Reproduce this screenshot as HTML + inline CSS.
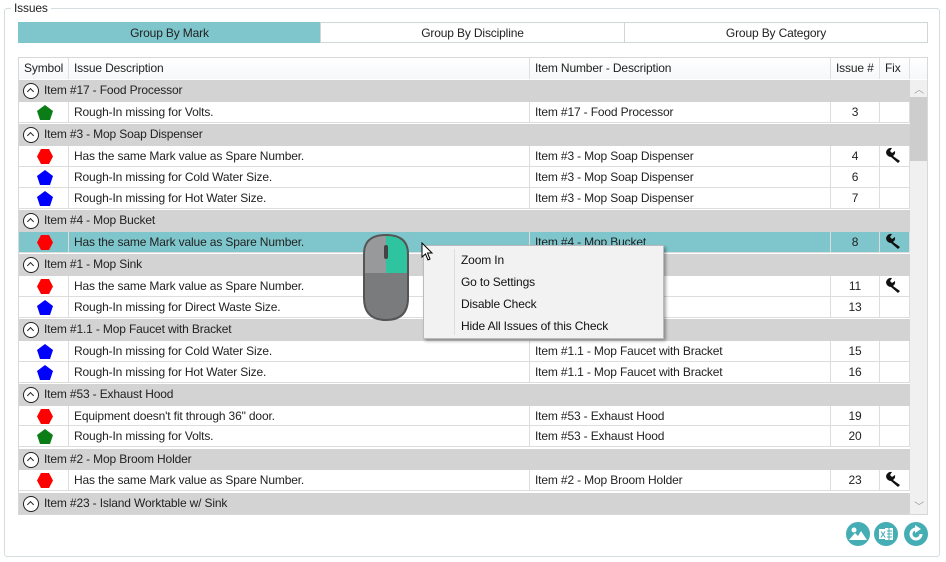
<!DOCTYPE html>
<html><head><meta charset="utf-8"><style>
*{box-sizing:border-box;margin:0;padding:0}
body{width:946px;height:562px;background:#fff;font-family:"Liberation Sans",sans-serif;font-size:12px;color:#222;position:relative;overflow:hidden;letter-spacing:-0.15px}
.a{position:absolute}
.gb{left:4px;top:8px;width:936px;height:549px;border:1px solid #d5dde0;border-radius:3px}
.leg{left:6px;top:-8px;background:#fff;padding:0 3px;font-size:12px;color:#222}
.tab{top:22px;height:21px;border:1px solid #cfd6d8;text-align:center;line-height:20px;background:#fff}
.grid{left:18px;top:57px;width:910px;height:458px;border:1px solid #d8d8d8;overflow:hidden}
.hd{top:0;height:21px;line-height:20px;border-right:1px solid #e0e0e0;padding-left:5px;background:linear-gradient(#fff,#f5f7f9)}
.g{left:0;width:891px;height:22px;background:#d3d3d3;line-height:21px;padding-left:25px}
.g:before{content:"";position:absolute;left:4px;top:3px;width:14px;height:14px;border:1.5px solid #222;border-radius:50%;background:#fff}
.g:after{content:"";position:absolute;left:9px;top:9px;width:4px;height:4px;border-left:1.5px solid #222;border-top:1.5px solid #222;transform:rotate(45deg)}
.r{left:0;width:891px;height:21px;line-height:20px;border-bottom:1px solid #ddd;background:#fff}
.r span{position:absolute;top:0;height:21px;border-right:1px solid #ddd}
.c1{left:0;width:50px}.c2{left:50px;width:461px;padding-left:5px}.c3{left:511px;width:301px;padding-left:5px}.c4{left:812px;width:49px;text-align:center}.c5{left:861px;width:30px}
.sel{background:#7ec6cc}
.sh{position:absolute;left:18px;top:3px;width:16px;height:15px}
.menu{left:423px;top:245px;width:241px;height:94px;background:#f2f2f2;border:1px solid #bbb;box-shadow:2px 2px 3px rgba(0,0,0,.35)}
.menu div{position:absolute;left:37px;font-size:12px;color:#111}
</style></head><body>
<div class="a gb"><div class="a leg">Issues</div></div>
<div class="a tab" style="left:18px;width:303px;background:#7ec6cc;border-color:#7ec6cc">Group By Mark</div>
<div class="a tab" style="left:320px;width:305px">Group By Discipline</div>
<div class="a tab" style="left:624px;width:304px">Group By Category</div>

<div class="a grid">
<div class="a hd" style="left:0;width:50px">Symbol</div>
<div class="a hd" style="left:50px;width:461px">Issue Description</div>
<div class="a hd" style="left:511px;width:301px">Item Number - Description</div>
<div class="a hd" style="left:812px;width:49px">Issue #</div>
<div class="a hd" style="left:861px;width:30px">Fix</div>
<div class="a hd" style="left:891px;width:19px;border:none"></div>

<div class="a g" style="top:22px">Item #17 - Food Processor</div>
<div class="a r" style="top:44px"><span class="c1"><svg class="sh" viewBox="0 0 16 15"><polygon points="8,0 16,6 13,15 3,15 0,6" fill="#0a7d16"/></svg></span><span class="c2">Rough-In missing for Volts.</span><span class="c3">Item #17 - Food Processor</span><span class="c4">3</span><span class="c5"></span></div>

<div class="a g" style="top:66px">Item #3 - Mop Soap Dispenser</div>
<div class="a r" style="top:88px"><span class="c1"><svg class="sh" viewBox="0 0 16 15"><polygon points="4,0 12,0 16,7.5 12,15 4,15 0,7.5" fill="#f00"/></svg></span><span class="c2">Has the same Mark value as Spare Number.</span><span class="c3">Item #3 - Mop Soap Dispenser</span><span class="c4">4</span><span class="c5"></span></div>
<div class="a r" style="top:109px"><span class="c1"><svg class="sh" viewBox="0 0 16 15"><polygon points="8,0 16,6 13,15 3,15 0,6" fill="#00f"/></svg></span><span class="c2">Rough-In missing for Cold Water Size.</span><span class="c3">Item #3 - Mop Soap Dispenser</span><span class="c4">6</span><span class="c5"></span></div>
<div class="a r" style="top:130px"><span class="c1"><svg class="sh" viewBox="0 0 16 15"><polygon points="8,0 16,6 13,15 3,15 0,6" fill="#00f"/></svg></span><span class="c2">Rough-In missing for Hot Water Size.</span><span class="c3">Item #3 - Mop Soap Dispenser</span><span class="c4">7</span><span class="c5"></span></div>

<div class="a g" style="top:152px">Item #4 - Mop Bucket</div>
<div class="a r sel" style="top:174px"><span class="c1"><svg class="sh" viewBox="0 0 16 15"><polygon points="4,0 12,0 16,7.5 12,15 4,15 0,7.5" fill="#f00"/></svg></span><span class="c2">Has the same Mark value as Spare Number.</span><span class="c3">Item #4 - Mop Bucket</span><span class="c4">8</span><span class="c5"></span></div>

<div class="a g" style="top:196px">Item #1 - Mop Sink</div>
<div class="a r" style="top:218px"><span class="c1"><svg class="sh" viewBox="0 0 16 15"><polygon points="4,0 12,0 16,7.5 12,15 4,15 0,7.5" fill="#f00"/></svg></span><span class="c2">Has the same Mark value as Spare Number.</span><span class="c3">Item #1 - Mop Sink</span><span class="c4">11</span><span class="c5"></span></div>
<div class="a r" style="top:239px"><span class="c1"><svg class="sh" viewBox="0 0 16 15"><polygon points="8,0 16,6 13,15 3,15 0,6" fill="#00f"/></svg></span><span class="c2">Rough-In missing for Direct Waste Size.</span><span class="c3">Item #1 - Mop Sink</span><span class="c4">13</span><span class="c5"></span></div>

<div class="a g" style="top:261px">Item #1.1 - Mop Faucet with Bracket</div>
<div class="a r" style="top:283px"><span class="c1"><svg class="sh" viewBox="0 0 16 15"><polygon points="8,0 16,6 13,15 3,15 0,6" fill="#00f"/></svg></span><span class="c2">Rough-In missing for Cold Water Size.</span><span class="c3">Item #1.1 - Mop Faucet with Bracket</span><span class="c4">15</span><span class="c5"></span></div>
<div class="a r" style="top:304px"><span class="c1"><svg class="sh" viewBox="0 0 16 15"><polygon points="8,0 16,6 13,15 3,15 0,6" fill="#00f"/></svg></span><span class="c2">Rough-In missing for Hot Water Size.</span><span class="c3">Item #1.1 - Mop Faucet with Bracket</span><span class="c4">16</span><span class="c5"></span></div>

<div class="a g" style="top:326px">Item #53 - Exhaust Hood</div>
<div class="a r" style="top:348px;height:20px"><span class="c1"><svg class="sh" viewBox="0 0 16 15"><polygon points="4,0 12,0 16,7.5 12,15 4,15 0,7.5" fill="#f00"/></svg></span><span class="c2">Equipment doesn't fit through 36" door.</span><span class="c3">Item #53 - Exhaust Hood</span><span class="c4">19</span><span class="c5"></span></div>
<div class="a r" style="top:368px"><span class="c1"><svg class="sh" viewBox="0 0 16 15"><polygon points="8,0 16,6 13,15 3,15 0,6" fill="#0a7d16"/></svg></span><span class="c2">Rough-In missing for Volts.</span><span class="c3">Item #53 - Exhaust Hood</span><span class="c4">20</span><span class="c5"></span></div>

<div class="a g" style="top:391px">Item #2 - Mop Broom Holder</div>
<div class="a r" style="top:412px"><span class="c1"><svg class="sh" viewBox="0 0 16 15"><polygon points="4,0 12,0 16,7.5 12,15 4,15 0,7.5" fill="#f00"/></svg></span><span class="c2">Has the same Mark value as Spare Number.</span><span class="c3">Item #2 - Mop Broom Holder</span><span class="c4">23</span><span class="c5"></span></div>

<div class="a g" style="top:435px">Item #23 - Island Worktable w/ Sink</div>

<div class="a" style="left:891px;top:22px;width:18px;height:436px;background:#f0f0f0"></div>
<div class="a" style="left:891px;top:39px;width:18px;height:64px;background:#cdcdcd"></div>
<div class="a" style="left:891px;top:23px;width:18px;text-align:center;color:#999;font-size:10px">︿</div>
<div class="a" style="left:891px;top:440px;width:18px;text-align:center;color:#999;font-size:10px">﹀</div>
</div>

<!-- wrench icons -->
<svg class="a" style="left:885px;top:147px" width="18" height="16" viewBox="0 0 18 16"><path d="M1 5 A5 5 0 0 1 7 1 L5 4 L7 6 L10 4 A5 5 0 0 1 8 9 L15 14 L13 16 L6 10 A5 5 0 0 1 1 5 Z" fill="#111"/></svg>
<svg class="a" style="left:885px;top:233px" width="18" height="16" viewBox="0 0 18 16"><path d="M1 5 A5 5 0 0 1 7 1 L5 4 L7 6 L10 4 A5 5 0 0 1 8 9 L15 14 L13 16 L6 10 A5 5 0 0 1 1 5 Z" fill="#111"/></svg>
<svg class="a" style="left:885px;top:277px" width="18" height="16" viewBox="0 0 18 16"><path d="M1 5 A5 5 0 0 1 7 1 L5 4 L7 6 L10 4 A5 5 0 0 1 8 9 L15 14 L13 16 L6 10 A5 5 0 0 1 1 5 Z" fill="#111"/></svg>
<svg class="a" style="left:885px;top:471px" width="18" height="16" viewBox="0 0 18 16"><path d="M1 5 A5 5 0 0 1 7 1 L5 4 L7 6 L10 4 A5 5 0 0 1 8 9 L15 14 L13 16 L6 10 A5 5 0 0 1 1 5 Z" fill="#111"/></svg>

<!-- context menu -->
<div class="a menu">
<div style="left:30px;top:3px;width:1px;height:86px;background:#ddd"></div>
<div style="top:7px">Zoom In</div>
<div style="top:29px">Go to Settings</div>
<div style="top:51px">Disable Check</div>
<div style="top:73px">Hide All Issues of this Check</div>
</div>

<!-- mouse -->
<svg class="a" style="left:360px;top:232px" width="52" height="92" viewBox="0 0 52 92">
<path d="M4 22 Q4 3 26 3 Q48 3 48 22 L48 66 Q48 88 26 88 Q4 88 4 66 Z" fill="#7a7b7d" stroke="#555" stroke-width="2"/>
<path d="M5 22 Q5 4 26 4 L26 41 L5 41 Z" fill="#98999b"/>
<path d="M26 4 Q47 4 47 22 L47 41 L26 41 Z" fill="#2ec4a0"/>
<rect x="24" y="13" width="4" height="14" rx="2" fill="#444"/>
</svg>
<!-- cursor -->
<svg class="a" style="left:421px;top:242px" width="14" height="20" viewBox="0 0 14 20"><path d="M1 1 L1 15 L4.5 12 L7 18 L9 17 L6.5 11 L11 11 Z" fill="#fff" stroke="#000" stroke-width="1"/></svg>

<!-- bottom icons -->
<svg class="a" style="left:846px;top:522px" width="24" height="24" viewBox="0 0 24 24"><circle cx="12" cy="12" r="12" fill="#45adb4"/><circle cx="8" cy="8" r="2.5" fill="#fff"/><path d="M3 18 L9 11 L12 14 L15 9 L21 18 Z" fill="#fff"/></svg>
<svg class="a" style="left:874px;top:522px" width="24" height="24" viewBox="0 0 24 24"><circle cx="12" cy="12" r="12" fill="#45adb4"/><rect x="11" y="6" width="8" height="12" fill="#fff"/><path d="M12 9h6M12 12h6M12 15h6M15 6v12" stroke="#45adb4" stroke-width="1"/><rect x="5" y="7" width="8" height="10" fill="#fff"/><text x="9" y="15.5" font-size="8" text-anchor="middle" fill="#45adb4" font-family="Liberation Sans" font-weight="bold">X</text></svg>
<svg class="a" style="left:904px;top:522px" width="24" height="24" viewBox="0 0 24 24"><circle cx="12" cy="12" r="12" fill="#45adb4"/><path d="M17 12 A5 5 0 1 1 12 7" fill="none" stroke="#fff" stroke-width="3"/><path d="M11 3 L17 7 L11 11 Z" fill="#fff"/></svg>
</body></html>
